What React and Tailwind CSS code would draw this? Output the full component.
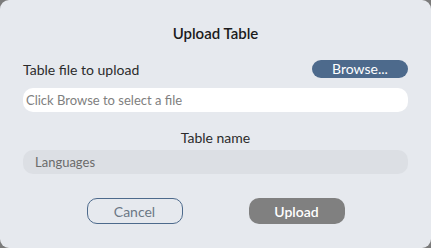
export default function App() {
  return (
    <div className="w-[431px] h-[248px] bg-[#7b7b7b]" style={{ fontFamily: 'Lato, "Noto Sans", sans-serif' }}>
      <div className="w-full h-full bg-[#e6e9ee] rounded-[9px] px-[23px] pt-[23px] flex flex-col">
        <h2 className="text-center text-[15px] font-semibold text-[#1b1b1b] leading-[20px]">Upload Table</h2>
        <div className="mt-[17px] flex items-center justify-between h-[18px]">
          <span className="text-[14px] text-[#2b2b2b]">Table file to upload</span>
          <button className="w-[96px] h-[18px] rounded-full bg-[#4d6a8c] text-white text-[14px] leading-[18px]">Browse...</button>
        </div>
        <input
          className="mt-[10px] h-[24px] w-full rounded-[10px] bg-white px-[3px] text-[13px] placeholder:text-[#808080] outline-none"
          placeholder="Click Browse to select a file"
        />
        <div className="mt-[17px] text-center text-[14px] text-[#2b2b2b] leading-[18px]">Table name</div>
        <input
          className="mt-[3px] h-[24px] w-full rounded-[10px] bg-[#dcdfe4] px-[12px] text-[13px] text-[#6b6b6b] outline-none"
          defaultValue="Languages"
        />
        <div className="mt-[24px] flex justify-center gap-[66px]">
          <button className="w-[96px] h-[26px] rounded-[10px] border border-[#4d6a8c] text-[14px] text-[#6b7785]">Cancel</button>
          <button className="w-[96px] h-[26px] rounded-[10px] bg-[#808080] text-[14px] font-semibold text-white">Upload</button>
        </div>
      </div>
    </div>
  );
}
